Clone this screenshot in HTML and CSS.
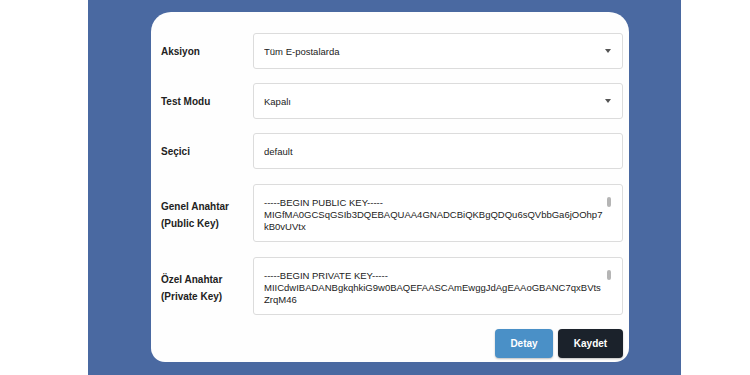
FILE: index.html
```html
<!DOCTYPE html>
<html lang="tr">
<head>
    <meta charset="UTF-8">
    <meta name="viewport" content="width=device-width, initial-scale=1.0">
    <title>DKIM Ayarları</title>
    <link rel="stylesheet" href="styles.css">
</head>
<body>
    <div class="panel">
        <form class="card">
            <div class="row">
                <label for="aksiyon">Aksiyon</label>
                <div class="select-wrap">
                    <select id="aksiyon" name="aksiyon">
                        <option>Tüm E-postalarda</option>
                        <option>Hiçbiri</option>
                    </select>
                </div>
            </div>

            <div class="row">
                <label for="test">Test Modu</label>
                <div class="select-wrap">
                    <select id="test" name="test">
                        <option>Kapalı</option>
                        <option>Açık</option>
                    </select>
                </div>
            </div>

            <div class="row">
                <label for="secici">Seçici</label>
                <input id="secici" name="secici" type="text" value="default">
            </div>

            <div class="row">
                <label class="tall" for="public">Genel Anahtar<br>(Public Key)</label>
                <div class="area-wrap">
                    <textarea id="public" name="public">-----BEGIN PUBLIC KEY-----
MIGfMA0GCSqGSIb3DQEBAQUAA4GNADCBiQKBgQDQu6sQVbbGa6jOOhp7kB0vUVtx</textarea>
                    <span class="thumb"></span>
                </div>
            </div>

            <div class="row">
                <label class="tall" for="private">Özel Anahtar<br>(Private Key)</label>
                <div class="area-wrap">
                    <textarea id="private" name="private">-----BEGIN PRIVATE KEY-----
MIICdwIBADANBgkqhkiG9w0BAQEFAASCAmEwggJdAgEAAoGBANC7qxBVtsZrqM46</textarea>
                    <span class="thumb"></span>
                </div>
            </div>

            <div class="actions">
                <button type="button" class="btn btn-info">Detay</button>
                <button type="submit" class="btn btn-dark">Kaydet</button>
            </div>
        </form>
    </div>
</body>
</html>
```

FILE: styles.css
```css
body {
    font-family: "Liberation Sans", Arial, sans-serif;
    background-color: #ffffff;
    margin: 0;
    padding: 0;
}
.panel {
    width: 530px;
    height: 363px;
    margin-left: 88px;
    padding: 12px 0 0 63px;
    background-color: #4a69a1;
}
.card {
    width: 462px;
    padding: 21px 6px 4px 10px;
    background-color: #fefefe;
    border-radius: 20px 20px 14px 14px;
    display: flex;
    flex-direction: column;
    gap: 14px;
}
.row {
    display: flex;
    align-items: center;
}
.row:nth-child(n+4) {
    margin-top: 1px;
}
label {
    width: 92px;
    flex-shrink: 0;
    font-size: 10px;
    font-weight: bold;
    line-height: 17px;
    color: #222;
}
label.tall {
    padding-top: 3px;
}
input, select, textarea {
    box-sizing: border-box;
    width: 370px;
    margin: 0;
    border: 1px solid #dcdcdc;
    border-radius: 3px;
    background-color: #fff;
    font-family: "Liberation Sans", Arial, sans-serif;
    font-size: 9.5px;
    color: #222;
    outline: none;
}
input, select {
    height: 36px;
    padding: 0 10px;
}
select {
    appearance: none;
    -webkit-appearance: none;
}
.select-wrap, .area-wrap {
    position: relative;
}
.select-wrap::after {
    content: "";
    position: absolute;
    right: 12px;
    top: 16px;
    border-left: 3.5px solid transparent;
    border-right: 3.5px solid transparent;
    border-top: 4px solid #555;
}
textarea {
    display: block;
    height: 58px;
    padding: 12px 18px 0 10px;
    line-height: 12px;
    resize: none;
    overflow: hidden;
}
.thumb {
    position: absolute;
    right: 12px;
    top: 13px;
    width: 4px;
    height: 10px;
    border-radius: 2px;
    background-color: #b5b5b5;
}
.actions {
    display: flex;
    justify-content: flex-end;
    gap: 5px;
}
.btn {
    height: 29px;
    border: none;
    border-radius: 4px;
    font-family: "Liberation Sans", Arial, sans-serif;
    font-size: 10px;
    font-weight: bold;
    color: #fff;
    box-shadow: 0 1px 2px rgba(0, 0, 0, 0.25);
}
.btn-info {
    width: 58px;
    background-color: #4a90c7;
}
.btn-dark {
    width: 65px;
    background-color: #1b222b;
}
```
